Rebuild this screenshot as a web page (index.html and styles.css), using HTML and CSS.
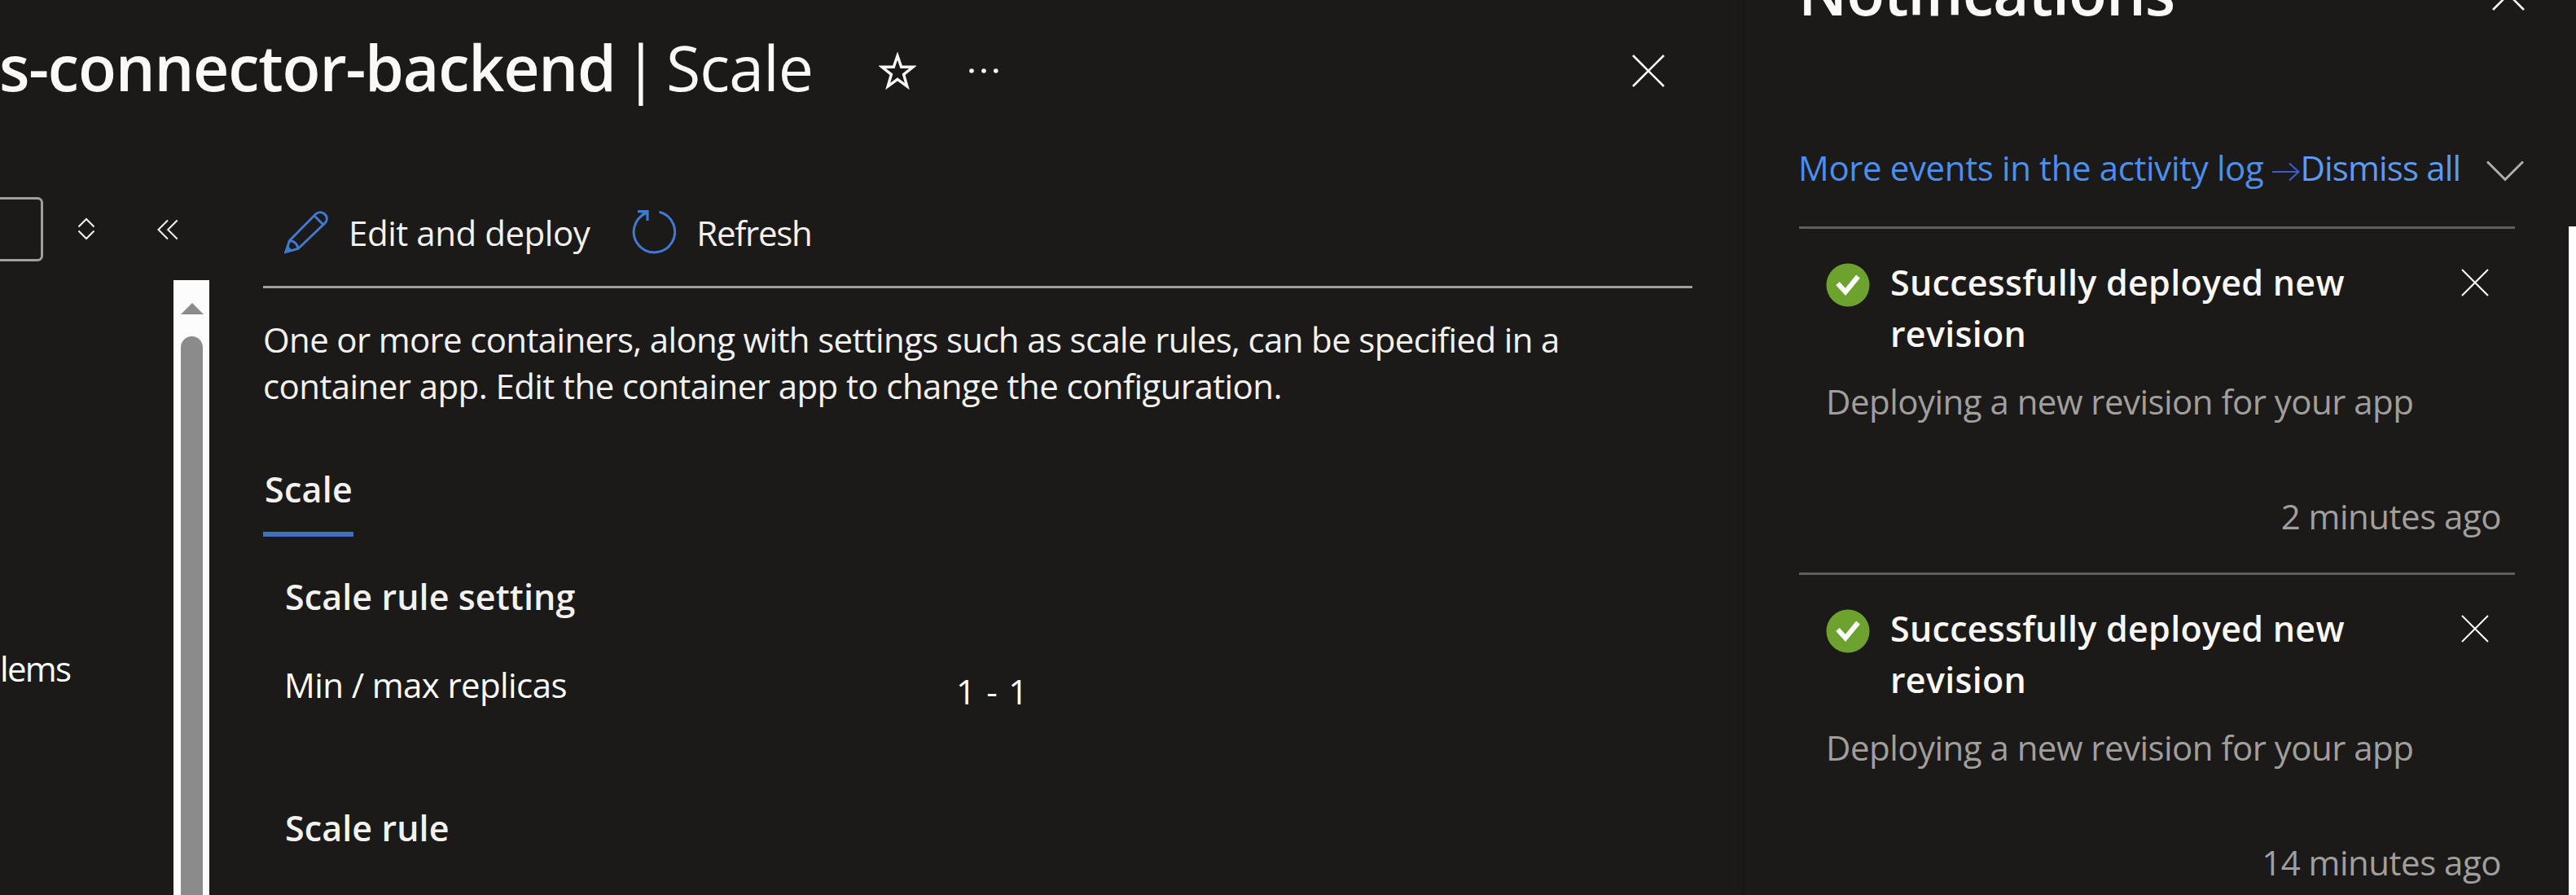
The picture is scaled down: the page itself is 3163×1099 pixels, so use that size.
FILE: index.html
```html
<!DOCTYPE html>
<html lang="en">
<head>
<meta charset="utf-8">
<title>Scale - Container app</title>
<link rel="stylesheet" href="styles.css">
</head>
<body>
<div class="portal">
  <main class="blade">
    <header class="blade-header">
      <h1 class="title"><span class="title-name">s-connector-backend</span><span>|</span><span class="title-page">Scale</span></h1>
      <svg class="icon star" width="46" height="46" viewBox="0 0 46 46"><path d="M23 4.5 27.7 18.3H42L30.6 27.4 34.8 42 23 33.4 11.2 42 15.4 27.4 4 18.3H18.3Z" fill="none" stroke="currentColor" stroke-width="3.4"/></svg>
      <svg class="icon more" width="36" height="8" viewBox="0 0 36 8"><g fill="currentColor"><circle cx="3" cy="4" r="2.8"/><circle cx="18" cy="4" r="2.8"/><circle cx="32.800" cy="4" r="2.8"/></g></svg>
      <svg class="icon close" width="40" height="40" viewBox="0 0 40 40"><path d="M1 1 39 39M39 1 1 39" stroke="currentColor" stroke-width="2.6"/></svg>
    </header>
    <div class="blade-body">
      <aside class="sidebar">
        <div class="search-row">
          <div class="search"></div>
          <svg class="icon updown" width="22" height="28" viewBox="0 0 22 28"><path d="M1.500 11.500 11 2 20.500 11.500M1.500 16.500 11 26 20.500 16.500" fill="none" stroke="currentColor" stroke-width="2"/></svg>
          <svg class="icon collapse" width="26" height="26" viewBox="0 0 26 26"><path d="M13 1.500 1.500 13 13 24.500M24.700 1.500 13.200 13 24.700 24.500" fill="none" stroke="currentColor" stroke-width="2"/></svg>
        </div>
        <div class="menu">
          <nav class="menu-items"><span class="menu-item">lems</span></nav>
          <div class="scrollbar">
            <svg width="28" height="14" viewBox="0 0 28 14"><path d="M14 0 28 14H0Z" fill="#8b8b8b"/></svg>
            <div class="thumb"></div>
          </div>
        </div>
      </aside>
      <section class="content">
        <div class="toolbar">
          <svg class="tool-icon" width="54" height="54" viewBox="0 0 54 54"><g fill="none" stroke="currentColor" stroke-width="3"><path d="M2 51.500 6.500 37.500 38.500 5C46-2 57 8 50 16L17 47.500Z"/><path d="M37 7 48 18M6.500 37.500C12.500 38 16 41 17 47.500"/></g><path d="M0 53 3 43 11 50Z" fill="currentColor"/></svg>
          <span class="tool-edit">Edit and deploy</span>
          <svg class="tool-icon refresh-icon" width="54" height="54" viewBox="0 0 54 54"><g fill="none" stroke="currentColor" stroke-width="3"><path d="M33.500 2.300A25.200 25.200 0 1 1 17 3.800"/><path d="M7 1.600H19V13" stroke-width="3.200"/><path d="M12 6 19 1.500"/></g></svg>
          <span class="tool-refresh">Refresh</span>
        </div>
        <p class="description"><span class="line-a">One or more containers, along with settings such as scale rules, can be specified in a</span><br><span class="line-b">container app. Edit the container app to change the configuration.</span></p>
        <div class="tab">Scale</div>
        <div class="settings">
          <h2>Scale rule setting</h2>
          <div class="setting"><span class="setting-name">Min / max replicas</span><span class="setting-value">1 - 1</span></div>
          <h2>Scale rule</h2>
        </div>
      </section>
    </div>
  </main>
  <aside class="notifications">
    <header class="panel-header">
      <h2 class="panel-title">Notifications</h2>
      <svg class="icon" width="40" height="40" viewBox="0 0 40 40"><path d="M1 1 39 39M39 1 1 39" stroke="currentColor" stroke-width="2.6"/></svg>
    </header>
    <div class="links">
      <a class="log">More events in the activity log</a>
      <svg class="arrow" width="34" height="24" viewBox="0 0 34 24"><path d="M0 12H32.500M21 1.500 32.500 12 21 22.500" fill="none" stroke="currentColor" stroke-width="2.200"/></svg>
      <a class="dismiss">Dismiss all</a>
      <svg class="chevron" width="46" height="26" viewBox="0 0 46 26"><path d="M1 1.500 23 23.500 45 1.500" fill="none" stroke="currentColor" stroke-width="3"/></svg>
    </div>
    <div class="panel-body">
      <div class="list">
        <article class="item">
          <div class="item-head">
            <svg class="check" width="54" height="54" viewBox="0 0 54 54"><circle cx="27" cy="27" r="26.500" fill="#6ea22f"/><path d="M14.500 25 24 35.500 39.500 16.500" fill="none" stroke="#fff" stroke-width="6"/></svg>
            <h3>Successfully deployed new<br>revision</h3>
            <svg class="dismiss-x" width="34" height="34" viewBox="0 0 34 34"><path d="M1 1 33 33M33 1 1 33" stroke="currentColor" stroke-width="2"/></svg>
          </div>
          <p class="item-text">Deploying a new revision for your app</p>
          <p class="item-time">2 minutes ago</p>
        </article>
        <article class="item">
          <div class="item-head">
            <svg class="check" width="54" height="54" viewBox="0 0 54 54"><circle cx="27" cy="27" r="26.500" fill="#6ea22f"/><path d="M14.500 25 24 35.500 39.500 16.500" fill="none" stroke="#fff" stroke-width="6"/></svg>
            <h3>Successfully deployed new<br>revision</h3>
            <svg class="dismiss-x" width="34" height="34" viewBox="0 0 34 34"><path d="M1 1 33 33M33 1 1 33" stroke="currentColor" stroke-width="2"/></svg>
          </div>
          <p class="item-text">Deploying a new revision for your app</p>
          <p class="item-time">14 minutes ago</p>
        </article>
      </div>
      <div class="panel-scroll"></div>
    </div>
  </aside>
</div>
</body>
</html>
```
FILE: styles.css
```css
* { box-sizing: border-box; }
body { margin: 0; background: #1b1a19; color: #f3f2f1; font: 42px/57px "Open Sans", "Noto Sans", sans-serif; letter-spacing: -.5px; white-space: nowrap; }
h1, h2, h3, p { margin: 0; }
svg { display: block; flex: none; }
.portal { display: flex; width: 3163px; height: 1099px; overflow: hidden; }

/* Blade */
.blade { width: 2142px; flex: none; display: flex; flex-direction: column; }
.blade-header { display: flex; flex: none; align-items: center; height: 135px; padding-top: 30px; padding-right: 98px; margin-bottom: 107px; color: #faf9f8; }
.title { display: flex; gap: 10px; margin-left: -1px; font-size: 77px; line-height: 105px; font-weight: 400; letter-spacing: 0; }
.title-name { font-weight: 600; letter-spacing: -1.2px; }
.title-page { letter-spacing: -.93px; }
.blade-header .icon { margin-top: 8px; }
.star { margin-left: 81px; }
.more { margin-left: 65px; }
.blade-header .close { margin-left: auto; }
.blade-body { display: flex; flex: 1; }

/* Sidebar */
.sidebar { width: 257px; flex: none; display: flex; flex-direction: column; }
.search-row { display: flex; height: 102px; }
.search { width: 53px; height: 79px; border: 3px solid #a19f9d; border-left: 0; border-radius: 0 7px 7px 0; }
.updown { margin: 25px 0 0 42px; }
.collapse { margin: 27px 0 0 76px; }
.menu { display: flex; flex: 1; }
.menu-items { width: 213px; padding-top: 448px; color: #fff; }
.menu-item { letter-spacing: -1.7px; }
.scrollbar { width: 44px; padding: 28px 8px 0 9px; background: #fcfcfc; display: flex; flex-direction: column; gap: 27px; }
.thumb { flex: 1; width: 27px; background: #8b8b8b; border-radius: 14px 14px 0 0; }

/* Content */
.content { width: 1755px; margin-left: 66px; }
.toolbar { display: flex; height: 112px; padding: 15px 0 0 26px; border-bottom: 3px solid #a19f9d; }
.tool-icon { color: #4279d0; margin-top: 1px; margin-right: 25px; }
.tool-edit { letter-spacing: -.45px; }
.refresh-icon { margin-left: 52px; }
.tool-refresh { letter-spacing: -1.3px; }
.description { margin: 34px 0 67px; }
.line-a { letter-spacing: -.65px; }
.line-b { letter-spacing: -.58px; }
.tab { width: 111px; height: 90px; padding-left: 2px; font-size: 43px; line-height: 63px; font-weight: 600; letter-spacing: .25px; border-bottom: 6px solid #3f70bb; }
.settings { padding: 42px 0 0 27px; }
.settings h2 { font-size: 43px; line-height: 63px; font-weight: 600; letter-spacing: .1px; }
.setting { display: flex; margin: 48px 0 108px -1px; color: #fff; }
.setting-name { width: 825px; letter-spacing: -.6px; }
.setting-value { padding-top: 8px; letter-spacing: 1.2px; }

/* Notifications */
.notifications { flex: 1; display: flex; flex-direction: column; padding-left: 67px; box-shadow: -2px 0 6px rgba(0, 0, 0, .25); }
.panel-header { display: flex; flex: none; justify-content: space-between; align-items: center; margin: -63px 63px 135px -1px; color: #faf9f8; }
.panel-title { font-size: 77px; line-height: 105px; font-weight: 600; letter-spacing: -1.13px; }
.panel-header .icon { margin-top: 7px; }
.links { display: flex; flex: none; height: 101px; margin-left: -1px; }
.log { color: #4b8ff0; letter-spacing: -.38px; }
.arrow { color: #3a5dcb; margin: 22px 0 0 11px; }
.dismiss { color: #5b9bf2; letter-spacing: -.85px; }
.chevron { color: #b3b0ad; margin: 20px 0 0 32px; }
.panel-body { display: flex; flex: 1; justify-content: space-between; }
.panel-scroll { width: 9px; background: #fff; }
.list { width: 879px; }
.item { height: 425px; border-top: 3px solid #605e5c; padding: 34px 17px 0 33px; }
.item-head { display: flex; padding-right: 15px; color: #faf9f8; }
.check { margin: 8px 25px 0 0; }
.item h3 { font-size: 43px; line-height: 63px; font-weight: 600; letter-spacing: .28px; }
.dismiss-x { margin: 15px 0 0 auto; }
.item-text { margin: 23px 0 84px; color: #a19f9d; letter-spacing: -.53px; }
.item-time { text-align: right; color: #a19f9d; }
```
